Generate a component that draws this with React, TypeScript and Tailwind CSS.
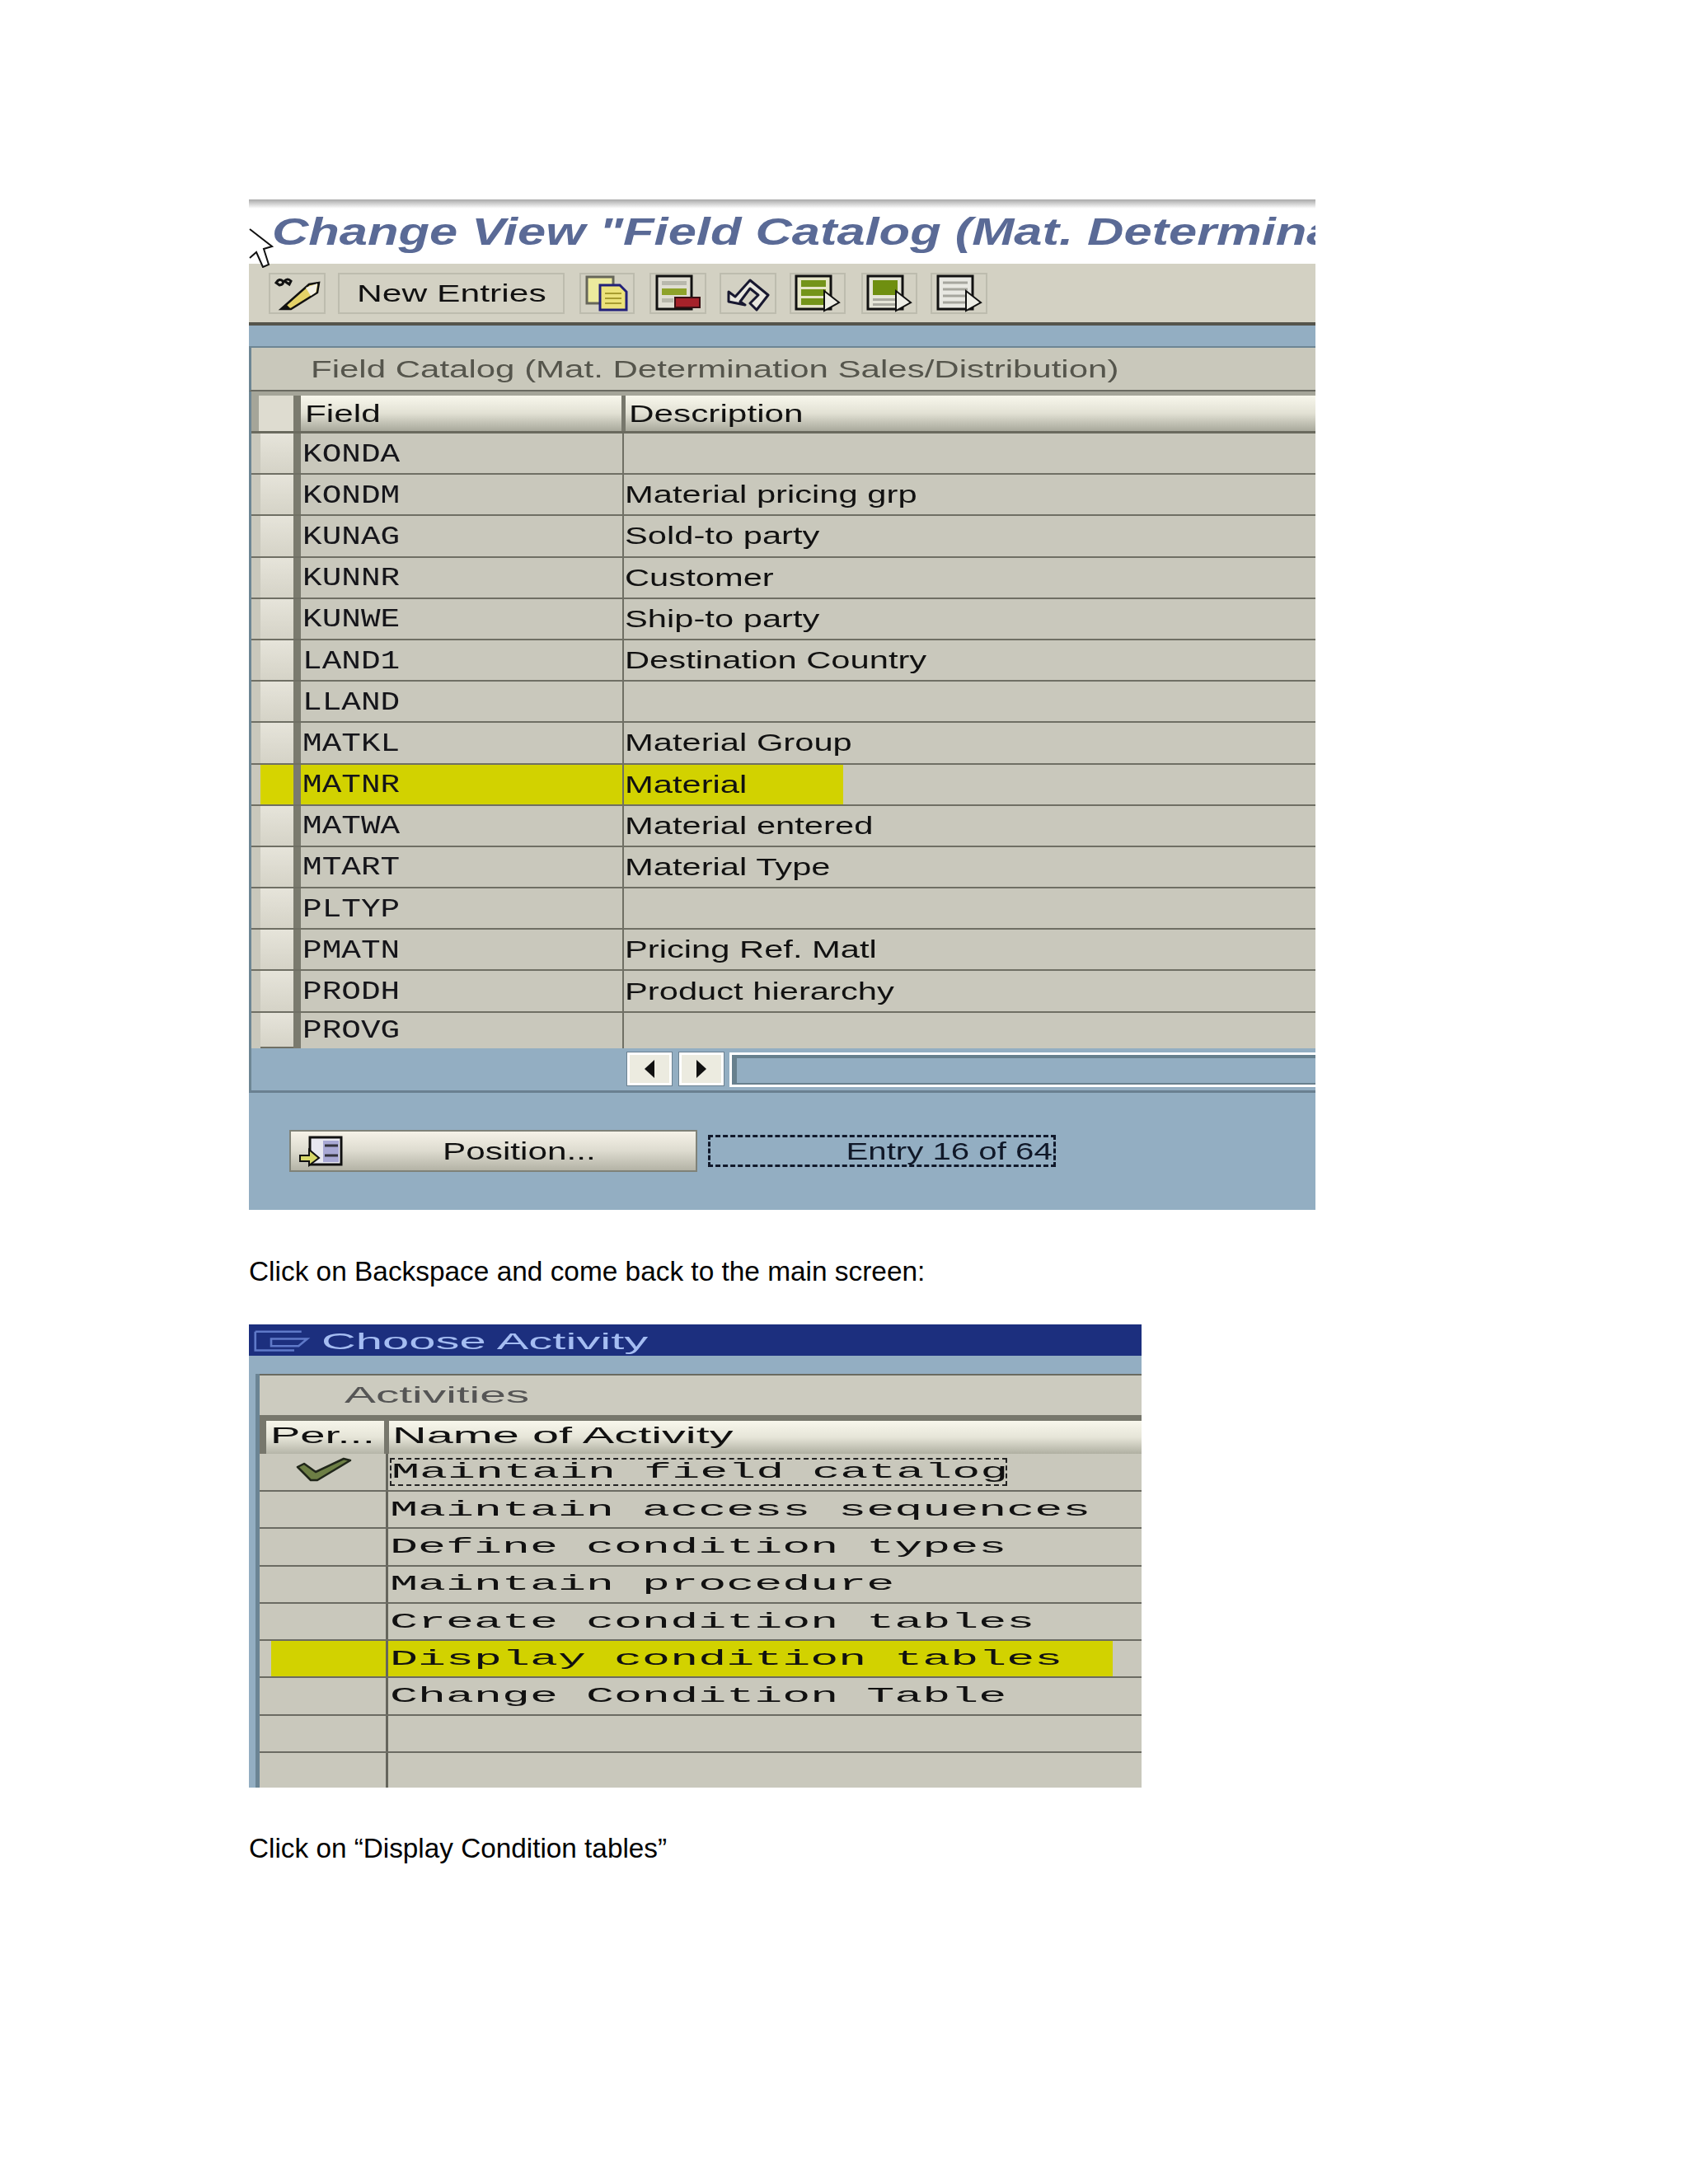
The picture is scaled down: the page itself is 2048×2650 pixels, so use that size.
import React from "react";

const fieldRows: [string, string, boolean?][] = [
  ["KONDA", ""],
  ["KONDM", "Material pricing grp"],
  ["KUNAG", "Sold-to party"],
  ["KUNNR", "Customer"],
  ["KUNWE", "Ship-to party"],
  ["LAND1", "Destination Country"],
  ["LLAND", ""],
  ["MATKL", "Material Group"],
  ["MATNR", "Material", true],
  ["MATWA", "Material entered"],
  ["MTART", "Material Type"],
  ["PLTYP", ""],
  ["PMATN", "Pricing Ref. Matl"],
  ["PRODH", "Product hierarchy"],
];

const activities: [string, boolean?][] = [
  ["Maintain access sequences"],
  ["Define condition types"],
  ["Maintain procedure"],
  ["Create condition tables"],
  ["Display condition tables", true],
  ["Change Condition Table"],
  [""],
  [""],
];

function ToolButton({ w, children }: { w: string; children: React.ReactNode }) {
  return (
    <div className={`${w} h-[50px] flex items-center justify-center border-2 border-[#bdbcae] bg-[#d3d1c3] shrink-0`}>
      {children}
    </div>
  );
}

function FieldRow({ name, desc, hi, h }: { name: string; desc: string; hi?: boolean; h: string }) {
  return (
    <div className={`flex ${h} border-b-2 border-[#6f6f64]`}>
      <div className={`ml-[11px] w-[40px] shrink-0 ${hi ? "bg-[#d6d400]" : "bg-linear-to-b from-[#e6e4da] to-[#d5d3c7]"}`} />
      <div className="w-[9px] shrink-0 bg-[#7a7a6e]" />
      <div className={`w-[392px] shrink-0 flex items-center pl-[2px] border-r-2 border-[#6f6f64] ${hi ? "bg-[#d2d200]" : ""}`}>
        <span className="inline-block origin-left scale-x-[1.27] font-['Liberation_Mono',monospace] text-[31px] leading-none text-[#15151a] whitespace-nowrap translate-y-[1px]">
          {name}
        </span>
      </div>
      <div className="flex-1 flex">
        <div className={`${hi ? "w-[266px] bg-[#d2d200]" : "w-full"} flex items-center pl-[1px]`}>
          <span className="inline-block origin-left scale-x-[1.39] font-['Liberation_Sans',sans-serif] text-[30px] leading-none text-[#111] whitespace-nowrap">
            {desc}
          </span>
        </div>
      </div>
    </div>
  );
}

function ActivityRow({ label, hi, last }: { label: string; hi?: boolean; last?: boolean }) {
  return (
    <div className={`flex ${last ? "h-[42px]" : "h-[45.4px] border-b-2 border-[#6b6b62]"}`}>
      <div className="w-[153px] shrink-0 flex">
        <div className={`ml-[14px] flex-1 ${hi ? "bg-[#d2d200]" : ""}`} />
      </div>
      <div className="w-[3px] shrink-0 bg-[#65655c]" />
      <div className="flex-1 flex">
        <div className={`${hi ? "w-[879px] bg-[#d2d200]" : "w-full"} flex items-center pl-[2px]`}>
          <span className="inline-block origin-left scale-x-[2.18] font-['Liberation_Mono',monospace] text-[26px] leading-none text-[#111] whitespace-nowrap">
            {label}
          </span>
        </div>
      </div>
    </div>
  );
}

export default function App() {
  return (
    <div className="min-h-[2650px] bg-white pl-[302px] pt-[242px] font-['Liberation_Sans',sans-serif]">
      {/* first screenshot */}
      <div className="relative w-[1294px] h-[1226px] overflow-hidden bg-[#93aec2] flex flex-col blur-[0.4px]">
        {/* mouse pointer */}
        <svg className="absolute left-0 top-[35px] z-10" width="30" height="48" viewBox="0 0 30 48" fill="white" stroke="#111" strokeWidth="2">
          <path d="M1 1 L28 22 L18 25 L24 44 L17 47 L9 29 L1 36" />
        </svg>
        {/* title */}
        <div className="h-[78px] shrink-0 bg-linear-to-b from-[#a9a9a9] via-white via-[14%] to-white flex items-center overflow-hidden">
          <span className="ml-[28px] inline-block origin-left scale-x-[1.335] font-bold italic text-[46px] leading-none text-[#5a6a96] whitespace-nowrap">
            Change View "Field Catalog (Mat. Determination Sales/Distribution)
          </span>
        </div>
        {/* toolbar */}
        <div className="h-[75px] shrink-0 bg-[#d3d1c3] border-b-[4px] border-[#55554c] flex items-center pl-[24px]">
          <ToolButton w="w-[69px]">
            <svg width="56" height="42" viewBox="0 0 56 42">
              <path d="M2 8 q4 -6 8 -2 q2 4 -4 5 z M12 6 q4 -4 8 0 l-2 4 z" fill="none" stroke="#111" strokeWidth="3" />
              <path d="M8 40 L42 10 L54 8 L52 20 L20 40 Z" fill="#e4d268" stroke="#111" strokeWidth="2.5" />
              <path d="M38 14 L52 9 L50 20 L44 24 Z" fill="#f2f0e4" />
              <path d="M8 40 L14 34 L20 40 Z" fill="#111" />
            </svg>
          </ToolButton>
          <div className="w-[15px] shrink-0" />
          <ToolButton w="w-[275px]">
            <span className="inline-block scale-x-[1.42] text-[30px] leading-none text-[#111]">New Entries</span>
          </ToolButton>
          <div className="w-[18px] shrink-0" />
          <ToolButton w="w-[67px]">
            <svg width="54" height="44" viewBox="0 0 54 44">
              <rect x="2" y="2" width="32" height="32" fill="#ecea9e" stroke="#66665a" strokeWidth="3" />
              <path d="M18 12 H42 L50 20 V42 H18 Z" fill="#ece27a" stroke="#22207a" strokeWidth="3" />
              <path d="M24 22 H44 M24 28 H44 M24 34 H44" stroke="#a89c30" strokeWidth="2" />
            </svg>
          </ToolButton>
          <div className="w-[18px] shrink-0" />
          <ToolButton w="w-[69px]">
            <svg width="56" height="46" viewBox="0 0 56 46">
              <rect x="2" y="2" width="42" height="40" fill="#dfddd2" stroke="#111" strokeWidth="3" />
              <rect x="8" y="8" width="30" height="5" fill="#b8b8ac" />
              <rect x="8" y="17" width="30" height="8" fill="#8ea22a" />
              <rect x="8" y="29" width="14" height="5" fill="#b8b8ac" />
              <rect x="24" y="28" width="30" height="12" fill="#a5222a" stroke="#3a1014" strokeWidth="2" />
            </svg>
          </ToolButton>
          <div className="w-[16px] shrink-0" />
          <ToolButton w="w-[69px]">
            <svg width="56" height="44" viewBox="0 0 56 44" fill="none">
              <path d="M4 32 L4 20 L12 26 L30 6 L52 24 L38 42 L30 34 L40 24 L30 16 L18 32 L24 36 Z" fill="#e8e7df" stroke="#181830" strokeWidth="3" strokeLinejoin="round" />
            </svg>
          </ToolButton>
          <div className="w-[16px] shrink-0" />
          <ToolButton w="w-[68px]">
            <svg width="56" height="46" viewBox="0 0 56 46">
              <rect x="2" y="2" width="42" height="40" fill="#e6e6c8" stroke="#111" strokeWidth="3" />
              <rect x="8" y="7" width="30" height="8" fill="#74941a" />
              <rect x="8" y="18" width="30" height="8" fill="#74941a" />
              <rect x="8" y="29" width="30" height="8" fill="#74941a" />
              <path d="M36 20 V44 L54 34 Z" fill="#eeeee6" stroke="#111" strokeWidth="2" />
            </svg>
          </ToolButton>
          <div className="w-[19px] shrink-0" />
          <ToolButton w="w-[68px]">
            <svg width="56" height="46" viewBox="0 0 56 46">
              <rect x="2" y="2" width="42" height="40" fill="#e6e6d8" stroke="#111" strokeWidth="3" />
              <rect x="8" y="7" width="30" height="18" fill="#6f8f10" />
              <rect x="8" y="29" width="30" height="3" fill="#aaaaa0" />
              <rect x="8" y="35" width="30" height="3" fill="#aaaaa0" />
              <path d="M36 20 V44 L54 34 Z" fill="#eeeee6" stroke="#111" strokeWidth="2" />
            </svg>
          </ToolButton>
          <div className="w-[16px] shrink-0" />
          <ToolButton w="w-[69px]">
            <svg width="56" height="46" viewBox="0 0 56 46">
              <rect x="2" y="2" width="42" height="40" fill="#e8e8e2" stroke="#111" strokeWidth="3" />
              <path d="M8 10 H38 M8 18 H38 M8 26 H38 M8 34 H38" stroke="#a6a69e" strokeWidth="3" />
              <path d="M36 20 V44 L54 34 Z" fill="#eeeee6" stroke="#111" strokeWidth="2" />
            </svg>
          </ToolButton>
        </div>
        {/* blue band */}
        <div className="h-[27px] shrink-0 bg-[#93aec2] border-b-2 border-[#6d8694]" />
        {/* group title */}
        <div className="h-[53px] shrink-0 bg-[#c9c8bb] border-l-[3px] border-[#6d8694] border-b-2 border-b-[#6a6a60] flex items-center pl-[72px]">
          <span className="inline-block origin-left scale-x-[1.40] text-[30px] leading-none text-[#55554c] whitespace-nowrap">
            Field Catalog (Mat. Determination Sales/Distribution)
          </span>
        </div>
        {/* table */}
        <div className="shrink-0 bg-[#c9c8bc] border-l-[3px] border-[#6d8694]">
          <div className="flex h-[51px] pt-[5px] bg-[#a5a599] border-b-[3px] border-[#6a6a5e]">
            <div className="ml-[9px] w-[42px] shrink-0 bg-[#dedcd0]" />
            <div className="w-[9px] shrink-0 bg-[#7a7a6e]" />
            <div className="w-[389px] shrink-0 flex items-center pl-[5px] bg-linear-to-b from-[#f8f7ec] via-[#e2e1d4] to-[#a9a99c]">
              <span className="inline-block origin-left scale-x-[1.41] text-[30px] leading-none text-[#111]">Field</span>
            </div>
            <div className="w-[5px] shrink-0 bg-[#77776c]" />
            <div className="flex-1 flex items-center pl-[4px] bg-linear-to-b from-[#f8f7ec] via-[#e2e1d4] to-[#a9a99c]">
              <span className="inline-block origin-left scale-x-[1.41] text-[30px] leading-none text-[#111]">Description</span>
            </div>
          </div>
          {fieldRows.map(([n, d, hi]) => (
            <FieldRow key={n} name={n} desc={d} hi={hi} h="h-[50.2px]" />
          ))}
          <div className="flex h-[43px]">
            <div className="ml-[11px] w-[40px] shrink-0 bg-linear-to-b from-[#e6e4da] to-[#d5d3c7] border-b-2 border-[#6f6f64]" />
            <div className="w-[9px] shrink-0 bg-[#7a7a6e]" />
            <div className="w-[392px] shrink-0 flex items-center pl-[2px] border-r-2 border-[#6f6f64]">
              <span className="inline-block origin-left scale-x-[1.27] font-['Liberation_Mono',monospace] text-[31px] leading-none text-[#15151a]">PROVG</span>
            </div>
          </div>
        </div>
        {/* scroll row */}
        <div className="h-[54px] shrink-0 border-l-[3px] border-[#6d8694] border-b-[3px] border-b-[#6a8090] flex items-start pl-[456px] pt-[5px]">
          <div className="w-[54px] h-[40px] shrink-0 border-[3px] border-white outline-1 outline-[#6a8090] bg-[#ecebe0] flex items-center justify-center">
            <span className="w-0 h-0 border-y-[11px] border-y-transparent border-r-[12px] border-r-[#111]" />
          </div>
          <div className="w-[9px] shrink-0" />
          <div className="w-[54px] h-[40px] shrink-0 border-[3px] border-white outline-1 outline-[#6a8090] bg-[#ecebe0] flex items-center justify-center">
            <span className="w-0 h-0 border-y-[11px] border-y-transparent border-l-[12px] border-l-[#111]" />
          </div>
          <div className="w-[7px] shrink-0" />
          <div className="flex-1 h-[42px] border-y-[3px] border-l-[3px] border-white">
            <div className="h-full bg-[#93aec2] border-t-[4px] border-b-2 border-l-[6px] border-[#67808e]" />
          </div>
        </div>
        {/* position row */}
        <div className="flex-1 flex items-center pl-[49px]">
          <div className="w-[495px] h-[51px] shrink-0 relative flex items-center justify-center border-2 border-[#7f8278] bg-linear-to-b from-[#f6f2e8] via-[#dddbcf] to-[#b4b3a6]">
            <svg className="absolute left-[9px] top-[5px]" width="54" height="38" viewBox="0 0 54 38">
              <rect x="14" y="2" width="38" height="33" fill="#e8e8f0" stroke="#111" strokeWidth="3" />
              <rect x="30" y="6" width="19" height="26" fill="#a8a8d4" />
              <path d="M32 12 H48 M32 24 H48" stroke="#33333c" strokeWidth="3" />
              <path d="M2 24 H13 V17 L25 27 L13 36 V31 H2 Z" fill="#d8d86a" stroke="#111" strokeWidth="2" />
            </svg>
            <span className="inline-block scale-x-[1.41] text-[30px] leading-none text-[#111] pl-[44px]">Position...</span>
          </div>
          <div className="w-[13px] shrink-0" />
          <div className="w-[422px] h-[39px] shrink-0 flex items-center justify-end border-[3px] border-dashed border-[#10182a] pr-[1px]">
            <span className="inline-block origin-right scale-x-[1.34] text-[30px] leading-none text-[#101828] whitespace-nowrap">Entry 16 of 64</span>
          </div>
        </div>
      </div>

      <p className="mt-[55px] h-[40px] text-[33.4px] leading-[40px] text-black">Click on Backspace and come back to the main screen:</p>

      {/* second screenshot */}
      <div className="mt-[44px] w-[1083px] h-[562px] overflow-hidden bg-[#c9c8bc] flex flex-col blur-[0.4px]">
        <div className="h-[38px] shrink-0 bg-[#1c2f7e] flex items-center pl-[6px] pt-[3px]">
          <svg width="70" height="30" viewBox="0 0 80 32" fill="none" stroke="#5f79c8" strokeWidth="3">
            <path d="M2 2 H66 M2 2 V28 H56 M24 12 H74 L62 22 H24 Z M24 12 V22" />
          </svg>
          <span className="ml-[12px] inline-block origin-left scale-x-[2.07] text-[28px] leading-none text-[#a5bdf2] whitespace-nowrap">
            Choose Activity
          </span>
        </div>
        <div className="h-[22px] shrink-0 bg-[#93aec2]" />
        <div className="flex-1 flex overflow-hidden">
          <div className="w-[8px] shrink-0 bg-[#93aec2]" />
          <div className="w-[5px] shrink-0 bg-[#6b8494]" />
          <div className="flex-1 flex flex-col">
            <div className="h-[50px] shrink-0 border-t-2 border-[#6a6a60] bg-[#cccbbf] flex items-center pl-[103px]">
              <span className="inline-block origin-left scale-x-[2.03] text-[28px] leading-none text-[#555]">Activities</span>
            </div>
            <div className="h-[47px] shrink-0 flex bg-[#77776c] pt-[7px]">
              <div className="ml-[8px] w-[143px] shrink-0 flex items-center pl-[5px] bg-linear-to-b from-[#f6f5ea] via-[#e6e5d8] to-[#b5b5a8]">
                <span className="inline-block origin-left scale-x-[1.94] text-[28px] leading-none text-[#111] -translate-y-[2px]">Per...</span>
              </div>
              <div className="w-[6px] shrink-0" />
              <div className="flex-1 flex items-center pl-[4px] bg-linear-to-b from-[#f8f7ec] via-[#e6e5d8] to-[#b0b0a2]">
                <span className="inline-block origin-left scale-x-[2.06] text-[28px] leading-none text-[#111] whitespace-nowrap -translate-y-[2px]">Name of Activity</span>
              </div>
            </div>
            <div className="flex h-[46px] border-b-2 border-[#6b6b62]">
              <div className="w-[153px] shrink-0 flex items-center pl-[44px] pb-[6px]">
                <svg width="68" height="30" viewBox="0 0 68 30">
                  <path d="M2 12 L10 8 L24 18 L58 2 L66 4 L26 28 L18 28 Z" fill="#6d7f45" stroke="#20261a" strokeWidth="2.5" strokeLinejoin="round" />
                </svg>
              </div>
              <div className="w-[3px] shrink-0 bg-[#65655c]" />
              <div className="flex-1 flex items-center pl-[2px]">
                <div className="w-[749px] h-[34px] flex items-center border-y-[2px] border-l-[2px] border-r-[2px] border-dashed border-[#222]">
                  <span className="inline-block origin-left scale-x-[2.18] font-['Liberation_Mono',monospace] text-[26px] leading-none text-[#111] whitespace-nowrap">
                    Maintain field catalog
                  </span>
                </div>
              </div>
            </div>
            {activities.map(([l, hi], i) => (
              <ActivityRow key={i} label={l} hi={hi} last={i === activities.length - 1} />
            ))}
          </div>
        </div>
      </div>

      <p className="mt-[54px] h-[40px] text-[33.3px] leading-[40px] text-black">Click on “Display Condition tables”</p>
    </div>
  );
}
